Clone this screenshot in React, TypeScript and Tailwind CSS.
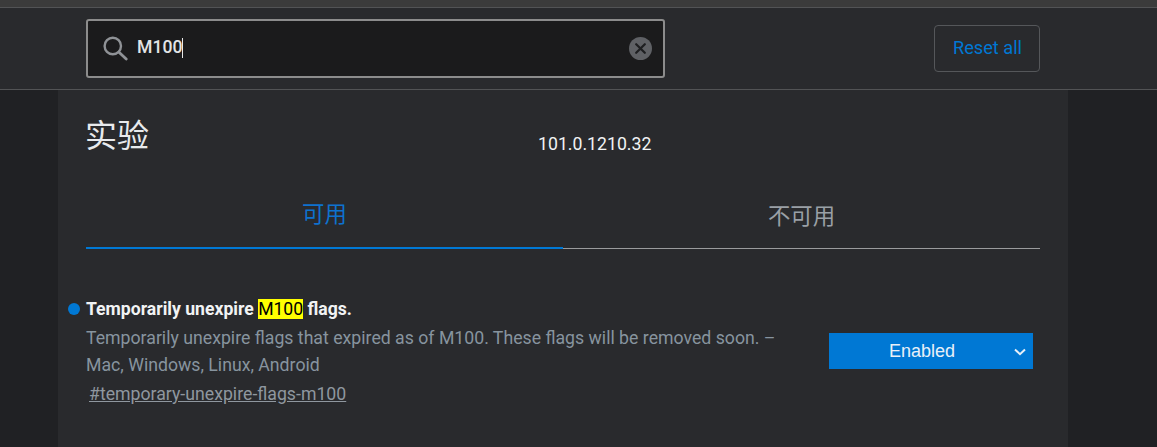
export default function App() {
  const roboto = "font-['Roboto','Noto_Sans_CJK_SC',sans-serif]";
  return (
    <div className={`${roboto} flex h-[447px] w-[1157px] flex-col overflow-hidden bg-[#202124]`}>
      <div className="h-[7px] shrink-0 bg-[#3b3b3b]" />
      <header className="flex h-[83px] shrink-0 items-center justify-between border-y border-y-[#525355] bg-[#292a2d] pb-[1px] pl-[86px] pr-[117px]">
        <div className="flex h-[59px] w-[579px] items-center rounded-[3px] border-2 border-[#8c8c8c] bg-[#1b1b1c] pl-[14px] pr-[11px]">
          <svg width="26" height="26" viewBox="0 0 26 26" fill="none" className="shrink-0" stroke="#8f9296">
            <circle cx="10.8" cy="11" r="8.2" strokeWidth="2.4" />
            <path d="M17 17.2 L24.2 24" strokeWidth="2.8" strokeLinecap="round" />
          </svg>
          <span className="ml-[9px] text-[17.6px] font-medium leading-none text-[#e3e4e6]">M100</span>
          <span className="h-[20px] w-px bg-[#e8e8e8]" />
          <span className="ml-auto flex h-[23px] w-[23px] items-center justify-center rounded-full bg-[#5f6165]">
            <svg width="11" height="11" viewBox="0 0 11 11" stroke="#1e1f21" strokeWidth="2.2" strokeLinecap="round">
              <path d="M1.2 1.2 L9.8 9.8 M9.8 1.2 L1.2 9.8" />
            </svg>
          </span>
        </div>
        <button className="flex h-[47px] w-[106px] items-center justify-center rounded-[4px] border border-[#55575a] text-[18.2px] text-[#0078d4]">
          <span className="ml-[1px]">Reset all</span>
        </button>
      </header>
      <main className="ml-[58px] w-[1010px] flex-1 bg-[#292a2d] px-[28px]">
        <div className="relative h-[97px]">
          <h1 className="ml-[-1px] pt-[24px] text-[32px] font-normal leading-[44px] text-[#e8eaed]">实验</h1>
          <span className="absolute left-[452px] top-[42px] text-[17.7px] leading-[24px] text-[#f1f3f4]">101.0.1210.32</span>
        </div>
        <div className="flex h-[62px] w-[954px]">
          <div className="flex w-1/2 items-start justify-center border-b-2 border-[#0078d4] pt-[11px] text-[22.4px] leading-[32px] text-[#0e72cf]">
            可用
          </div>
          <div className="flex w-1/2 items-start justify-center border-b border-[#9a9b9d] pt-[13px] text-[22.4px] leading-[32px] text-[#9aa0a6]">
            不可用
          </div>
        </div>
        <section className="relative mt-[48px] flex justify-between pr-[7px]">
          <span className="absolute left-[-18px] top-[6px] h-[12px] w-[12px] rounded-full bg-[#0078d4]" />
          <div className="w-[700px]">
            <div className="text-[17.6px] font-bold leading-[24px] text-[#f1f3f4]">
              Temporarily unexpire <mark className="bg-[#ffff00] font-normal text-black">M100</mark> flags.
            </div>
            <p className="mt-[4px] w-[700px] text-[17.7px] leading-[27px] text-[#87949f]">
              Temporarily unexpire flags that expired as of M100. These flags will be removed soon. – Mac, Windows, Linux, Android
            </p>
            <a className="ml-[3px] mt-[2px] block text-[17.7px] leading-[26px] text-[#8f979f] underline">#temporary-unexpire-flags-m100</a>
          </div>
          <div className="relative mt-[36px] flex h-[36px] w-[204px] items-center justify-center bg-[#0078d4] pr-[18px] font-['Liberation_Sans',sans-serif] text-[18px] text-[#e8f0f8]">
            Enabled
            <svg width="12" height="8" viewBox="0 0 12 8" fill="none" stroke="#e8f0f8" strokeWidth="2" className="absolute right-[7px] top-[15px]">
              <path d="M1 1.5 L6 6.2 L11 1.5" />
            </svg>
          </div>
        </section>
      </main>
    </div>
  );
}
